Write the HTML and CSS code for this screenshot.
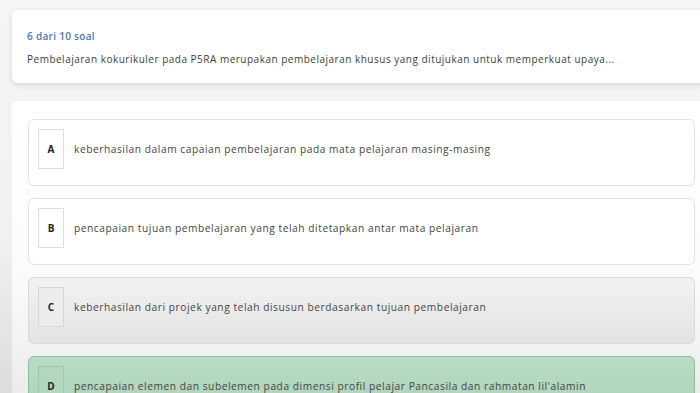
FILE: index.html
```html
<!DOCTYPE html>
<html lang="id">
<head>
    <meta charset="UTF-8">
    <meta name="viewport" content="width=device-width, initial-scale=1.0">
    <title>Soal P5RA</title>
    <link rel="stylesheet" href="styles.css">
</head>
<body>
    <div class="question-card">
        <div class="counter">6 dari 10 soal</div>
        <p class="question">Pembelajaran kokurikuler pada P5RA merupakan pembelajaran khusus yang ditujukan untuk memperkuat upaya...</p>
    </div>

    <div class="answers">
        <div class="option">
            <span class="letter">A</span>
            <span class="text">keberhasilan dalam capaian pembelajaran pada mata pelajaran masing-masing</span>
        </div>
        <div class="option">
            <span class="letter">B</span>
            <span class="text">pencapaian tujuan pembelajaran yang telah ditetapkan antar mata pelajaran</span>
        </div>
        <div class="option option-dim">
            <span class="letter">C</span>
            <span class="text">keberhasilan dari projek yang telah disusun berdasarkan tujuan pembelajaran</span>
        </div>
        <div class="option option-correct">
            <span class="letter">D</span>
            <span class="text">pencapaian elemen dan subelemen pada dimensi profil pelajar Pancasila dan rahmatan lil'alamin</span>
        </div>
    </div>
</body>
</html>
```

FILE: styles.css
```css
body {
    font-family: "Open Sans", "Noto Sans", sans-serif;
    margin: 0;
    padding: 10px 0 0 12px;
    background: linear-gradient(#f5f5f5 0%, #f1f1f1 60%, #dcdcdc 100%);
    height: 393px;
    box-sizing: border-box;
    overflow: hidden;
    color: #3d3d3d;
}
.question-card {
    margin-right: -20px;
    padding: 19px 15px 17px;
    background: white;
    border-radius: 6px;
    box-shadow: 0 2px 5px rgba(0, 0, 0, 0.12);
}
.counter {
    font-size: 10px;
    font-weight: 600;
    letter-spacing: 0.3px;
    color: #4a76bd;
    line-height: 14px;
}
.question {
    margin: 9px 0 0;
    font-size: 10px;
    line-height: 14px;
    letter-spacing: 0.5px;
}
.answers {
    margin-top: 18px;
    margin-right: -20px;
    padding: 18px 25px 20px 16px;
    background: linear-gradient(#ffffff 0%, #fbfbfb 50%, #e6e6e6 100%);
    border-radius: 6px 0 0 0;
    display: flex;
    flex-direction: column;
    gap: 12px;
}
.option {
    display: flex;
    align-items: center;
    gap: 10px;
    height: 67px;
    box-sizing: border-box;
    padding: 0 9px 7px;
    background: white;
    border: 1px solid #e3e3e3;
    border-radius: 6px;
}
.option-dim {
    background: linear-gradient(#f2f2f2, #e3e3e3);
    border-color: #dadada;
}
.option-correct {
    background: linear-gradient(#b9dcc4, #abcfb7);
    border-color: #8dbb9c;
}
.letter {
    width: 26px;
    height: 40px;
    flex-shrink: 0;
    display: flex;
    align-items: center;
    justify-content: center;
    font-size: 10px;
    font-weight: 700;
    color: #222;
    background: white;
    border: 1px solid #dedede;
    box-sizing: border-box;
}
.option-dim .letter {
    background: #ececec;
    border-color: #d6d6d6;
}
.option-correct .letter {
    background: #b3d6be;
    border-color: #9fc8ad;
}
.text {
    font-size: 10.2px;
    letter-spacing: 0.55px;
    color: #444;
}
```
